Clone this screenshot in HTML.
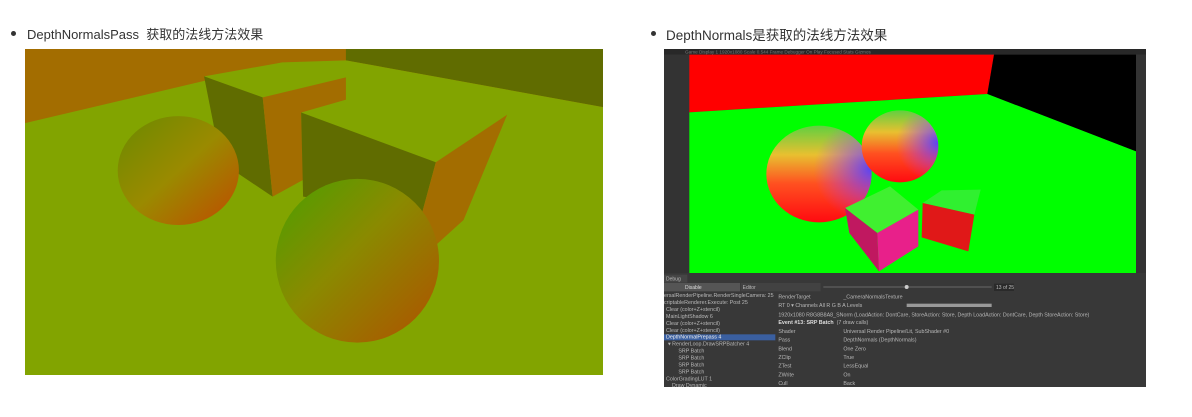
<!DOCTYPE html>
<html><head><meta charset="utf-8"><style>
body{margin:0;width:1192px;height:417px;background:#fff;overflow:hidden;position:relative;font-family:"Liberation Sans","Noto Sans CJK SC",sans-serif;color:#333}
.t{position:absolute;top:24px;font-size:13px;white-space:nowrap}
.b{position:absolute;top:31px;width:5px;height:5px;border-radius:50%;background:#333}
svg{position:absolute;display:block}
</style></head><body>
<div class="b" style="left:11px"></div>
<div class="t" style="left:27px">DepthNormalsPass&nbsp; 获取的法线方法效果</div>
<div class="b" style="left:651px"></div>
<div class="t" style="left:666px;font-size:13.5px">DepthNormals是获取的法线方法效果</div>

<svg style="left:25px;top:49px" width="578" height="326" viewBox="63 148 1459 976" preserveAspectRatio="none">
<defs>
<linearGradient id="s1" x1="0" y1="0" x2="1" y2="1"><stop offset="0" stop-color="#6a8a00"/><stop offset="0.5" stop-color="#9a8a00"/><stop offset="1" stop-color="#c04a00"/></linearGradient>
<linearGradient id="s2" x1="0" y1="0" x2="1" y2="1"><stop offset="0" stop-color="#4aa000"/><stop offset="0.45" stop-color="#8a8a00"/><stop offset="1" stop-color="#b05000"/></linearGradient>
</defs>
<rect x="63" y="148" width="1459" height="976" fill="#a36d00"/>
<polygon points="873,148 1522,148 1522,322 873,182" fill="#606c00"/>
<polygon points="63,370 713,188 873,182 1522,322 1522,1124 63,1124" fill="#82a400"/>
<polygon points="515,230 713,188 873,233 663,293" fill="#82a400"/>
<polygon points="515,230 663,293 688,590 600,520 540,380" fill="#606c00"/>
<polygon points="663,293 873,233 873,300 760,340 765,540 688,590" fill="#a36d00"/>
<polygon points="760,338 873,300 1280,345 1100,487" fill="#82a400"/>
<polygon points="760,338 1100,487 1065,640 765,590" fill="#606c00"/>
<polygon points="1100,487 1280,345 1170,660 1100,735 1065,640" fill="#a36d00"/>
<ellipse cx="450" cy="512" rx="153" ry="163" fill="url(#s1)"/>
<ellipse cx="902" cy="782" rx="206" ry="245" fill="url(#s2)"/>
</svg>

<svg style="left:664px;top:49px" width="482" height="338" viewBox="72 148 1446 1014" preserveAspectRatio="none" font-family="Liberation Sans, sans-serif">
<defs>
<linearGradient id="g1" x1="0" y1="0" x2="0" y2="1"><stop offset="0" stop-color="#60d040"/><stop offset="0.3" stop-color="#e8c030"/><stop offset="0.6" stop-color="#ff5020"/><stop offset="1" stop-color="#ff0a10"/></linearGradient>
<radialGradient id="g2" cx="1" cy="0.45" r="0.55"><stop offset="0" stop-color="#5040ff" stop-opacity="0.95"/><stop offset="1" stop-color="#c040ff" stop-opacity="0"/></radialGradient>
</defs>
<rect x="72" y="148" width="1446" height="1014" fill="#3a3a3a"/>
<rect x="72" y="148" width="1446" height="17" fill="#282828"/>
<text x="135" y="161" font-size="14" fill="#777">Game        Display 1    1920x1080        Scale            0.544          Frame Debugger On          Play Focused    Stats  Gizmos</text>
<rect x="72" y="165" width="76" height="655" fill="#333"/>
<rect x="1488" y="165" width="30" height="655" fill="#333"/>
<polygon points="148,165 1062,165 1042,283 148,338" fill="#ff0000"/>
<polygon points="1062,165 1488,165 1488,455 1042,283" fill="#000"/>
<polygon points="148,338 1042,283 1488,455 1488,820 148,820" fill="#00ff00"/>
<ellipse cx="537" cy="523" rx="158" ry="145" fill="url(#g1)"/>
<ellipse cx="537" cy="523" rx="158" ry="145" fill="url(#g2)"/>
<ellipse cx="780" cy="440" rx="115" ry="108" fill="url(#g1)"/>
<ellipse cx="780" cy="440" rx="115" ry="108" fill="url(#g2)"/>
<polygon points="615,625 750,560 835,630 712,700" fill="#40f030"/>
<polygon points="615,625 712,700 717,815 628,700" fill="#c01860"/>
<polygon points="712,700 835,630 835,740 717,815" fill="#e8208a"/>
<polygon points="848,610 905,572 1022,570 1003,645" fill="#30f030"/>
<polygon points="848,610 1003,645 985,755 845,713" fill="#e01818"/>
<rect x="72" y="820" width="1446" height="342" fill="#383838"/>
<rect x="72" y="825" width="70" height="24" fill="#454545"/>
<text x="78" y="843" font-size="15" fill="#bbb">Debug</text>
<rect x="72" y="850" width="228" height="25" fill="#555"/>
<text x="135" y="868" font-size="15" fill="#ddd">Disable</text>
<rect x="302" y="850" width="240" height="25" fill="#424242"/>
<text x="308" y="868" font-size="15" fill="#bbb">Editor</text>
<line x1="550" y1="862" x2="1055" y2="862" stroke="#777" stroke-width="2"/>
<circle cx="800" cy="862" r="6" fill="#ccc"/>
<rect x="1062" y="852" width="60" height="22" fill="#2a2a2a"/>
<text x="1068" y="868" font-size="15" fill="#bbb">13      of 25</text>
<rect x="72" y="1004" width="334" height="18" fill="#3a5fa0"/>
<g font-size="16" fill="#b8b8b8">
<text x="72" y="892">ersalRenderPipeline.RenderSingleCamera: 25</text>
<text x="72" y="913">criptableRenderer.Execute: Post       25</text>
<text x="78" y="934">Clear (color+Z+stencil)</text>
<text x="78" y="955">MainLightShadow                    6</text>
<text x="78" y="976">Clear (color+Z+stencil)</text>
<text x="78" y="997">Clear (color+Z+stencil)</text>
<text x="78" y="1017" fill="#eee">DepthNormalPrepass                 4</text>
<text x="84" y="1038">▾ RenderLoop.DrawSRPBatcher        4</text>
<text x="115" y="1059">SRP Batch</text>
<text x="115" y="1079">SRP Batch</text>
<text x="115" y="1100">SRP Batch</text>
<text x="115" y="1121">SRP Batch</text>
<text x="78" y="1142">ColorGradingLUT                    1</text>
<text x="96" y="1162">Draw Dynamic</text>
<text x="415" y="896">RenderTarget</text><text x="610" y="896">_CameraNormalsTexture</text>
<text x="415" y="922">RT 0    ▾  Channels  All  R  G  B  A    Levels</text>
<text x="415" y="950">1920x1080 R8G8B8A8_SNorm (LoadAction: DontCare, StoreAction: Store, Depth LoadAction: DontCare, Depth StoreAction: Store)</text>
<text x="415" y="973" fill="#ddd" font-weight="bold">Event #13: SRP Batch</text><text x="590" y="973">(7 draw calls)</text>
<text x="415" y="1000">Shader</text><text x="610" y="1000">Universal Render Pipeline/Lit, SubShader #0</text>
<text x="415" y="1026">Pass</text><text x="610" y="1026">DepthNormals (DepthNormals)</text>
<text x="415" y="1052">Blend</text><text x="610" y="1052">One Zero</text>
<text x="415" y="1078">ZClip</text><text x="610" y="1078">True</text>
<text x="415" y="1104">ZTest</text><text x="610" y="1104">LessEqual</text>
<text x="415" y="1130">ZWrite</text><text x="610" y="1130">On</text>
<text x="415" y="1156">Cull</text><text x="610" y="1156">Back</text>
</g>
<rect x="800" y="912" width="255" height="10" fill="#999"/>
</svg>
</body></html>
